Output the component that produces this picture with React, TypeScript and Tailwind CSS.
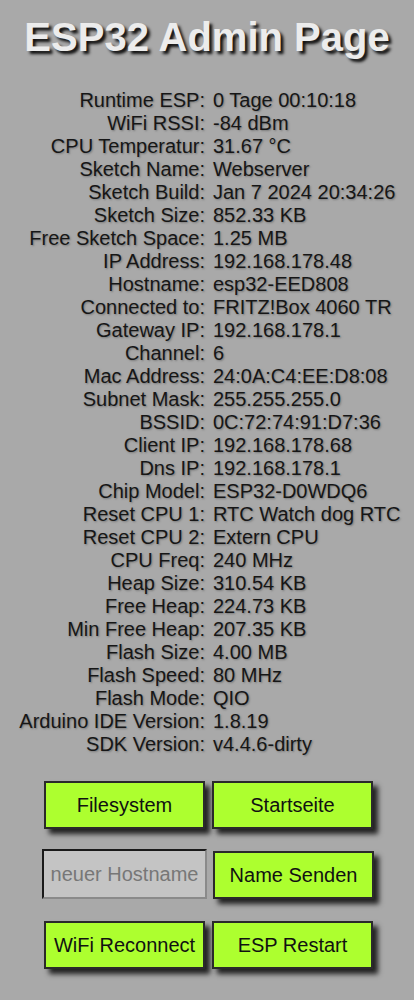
import React from "react";

const rows: [string, string][] = [
  ["Runtime ESP", "0 Tage 00:10:18"],
  ["WiFi RSSI", "-84 dBm"],
  ["CPU Temperatur", "31.67 °C"],
  ["Sketch Name", "Webserver"],
  ["Sketch Build", "Jan 7 2024 20:34:26"],
  ["Sketch Size", "852.33 KB"],
  ["Free Sketch Space", "1.25 MB"],
  ["IP Address", "192.168.178.48"],
  ["Hostname", "esp32-EED808"],
  ["Connected to", "FRITZ!Box 4060 TR"],
  ["Gateway IP", "192.168.178.1"],
  ["Channel", "6"],
  ["Mac Address", "24:0A:C4:EE:D8:08"],
  ["Subnet Mask", "255.255.255.0"],
  ["BSSID", "0C:72:74:91:D7:36"],
  ["Client IP", "192.168.178.68"],
  ["Dns IP", "192.168.178.1"],
  ["Chip Model", "ESP32-D0WDQ6"],
  ["Reset CPU 1", "RTC Watch dog RTC"],
  ["Reset CPU 2", "Extern CPU"],
  ["CPU Freq", "240 MHz"],
  ["Heap Size", "310.54 KB"],
  ["Free Heap", "224.73 KB"],
  ["Min Free Heap", "207.35 KB"],
  ["Flash Size", "4.00 MB"],
  ["Flash Speed", "80 MHz"],
  ["Flash Mode", "QIO"],
  ["Arduino IDE Version", "1.8.19"],
  ["SDK Version", "v4.4.6-dirty"],
];

function Btn({ label }: { label: string }) {
  return (
    <button className="w-[161px] h-[48px] bg-[#adff2f] border-2 border-[#2a2a2a] text-[20px] text-[#111] shadow-[5px_5px_5px_#222]">
      {label}
    </button>
  );
}

export default function App() {
  return (
    <div className="min-h-[1000px] bg-[#a9a9a9] font-['Liberation_Sans',Arial,sans-serif] pt-[14px]">
      {/* Title */}
      <h1 className="text-center text-[40px] font-bold text-[#ececec] leading-[46px] [text-shadow:3px_3px_3px_#111]">
        ESP32 Admin Page
      </h1>

      {/* Info table */}
      <div className="mt-[29px] text-[20px] leading-[23px] text-[#161616] [text-shadow:1px_1px_2px_#777]">
        {rows.map(([k, v]) => (
          <div key={k} className="flex">
            <div className="w-[205px] text-right whitespace-nowrap">{k}:</div>
            <div className="ml-[8px] whitespace-nowrap">{v}</div>
          </div>
        ))}
      </div>

      {/* Buttons */}
      <div className="mt-[25px] flex flex-col">
        <div className="flex gap-[7px] ml-[44px]">
          <Btn label="Filesystem" />
          <Btn label="Startseite" />
        </div>
        <div className="flex gap-[6px] items-end ml-[42px] mt-[20px]">
          <input
            placeholder="neuer Hostname"
            className="w-[165px] h-[50px] bg-[#c4c4c4] border-2 border-t-[#1a1a1a] border-l-[#1a1a1a] border-b-[#8a8a8a] border-r-[#8a8a8a] text-center text-[20px] placeholder:text-[#777] outline-none"
          />
          <Btn label="Name Senden" />
        </div>
        <div className="flex gap-[7px] ml-[44px] mt-[22px]">
          <Btn label="WiFi Reconnect" />
          <Btn label="ESP Restart" />
        </div>
      </div>
    </div>
  );
}
